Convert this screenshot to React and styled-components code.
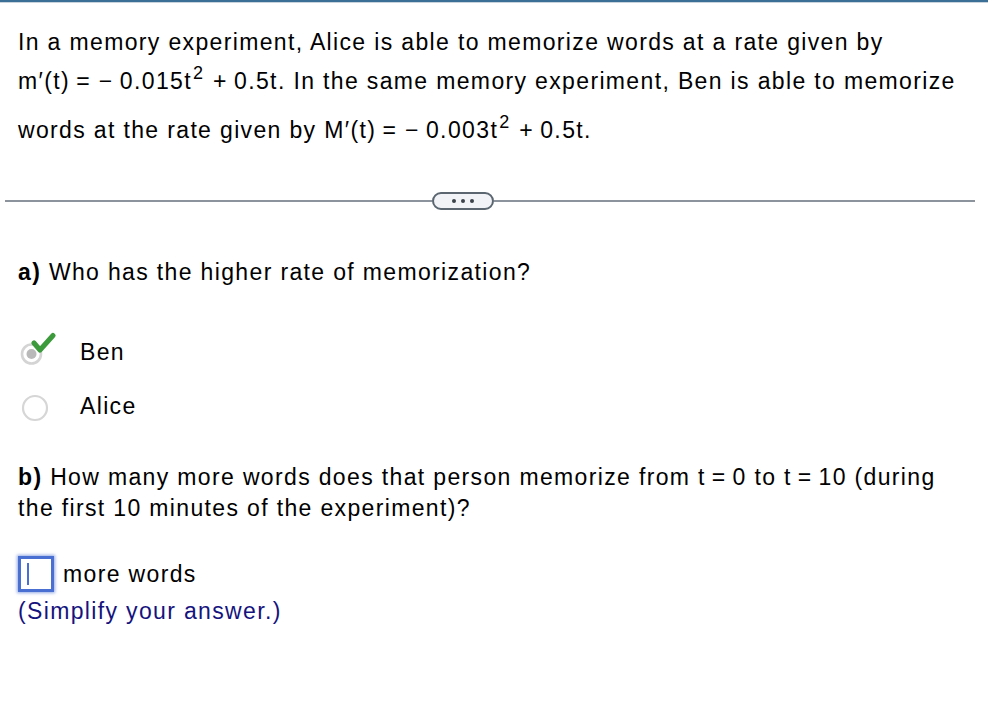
import React from 'react';
import styled, { createGlobalStyle } from 'styled-components';

// ==============================================

const Global = createGlobalStyle`
  html, body {
    margin: 0;
    padding: 0;
    background: #ffffff;
  }
  body {
    font-family: "Liberation Sans", Arial, sans-serif;
    color: #000000;
  }
`;

const Page = styled.div`
  width: 988px;
  height: 712px;
  overflow: hidden;
  border-top: 2px solid #3b6f96;
  box-shadow: inset 0 1px 0 #c9d3db;
  font-size: 23px;
  letter-spacing: 1.35px;
`;

const Question = styled.div`
  padding: 25px 20px 0 18px;
  line-height: 31px;
`;

const Math = styled.span`
  display: inline-block;
  padding-top: ${(p) => p.$pad || 0}px;
  line-height: 31px;
  white-space: nowrap;
  letter-spacing: 1.4px;
`;

const Sup = styled.sup`
  font-size: 18px;
  line-height: 0;
  vertical-align: 10px;
  letter-spacing: 0;
  margin: 0 10px 0 1px;
`;

const Divider = styled.div`
  display: flex;
  align-items: center;
  margin: 46px 13px 0 5px;
  &::before,
  &::after {
    content: '';
    flex: 1;
    height: 2px;
    background: #8c939c;
  }
  &::before {
    flex: 0 0 427px;
  }
`;

const MoreButton = styled.button`
  display: flex;
  align-items: center;
  justify-content: center;
  gap: 5px;
  width: 62px;
  height: 18px;
  padding: 0;
  border: 2px solid #5b6671;
  border-radius: 9px;
  background: #f1f3f6;
  span {
    width: 4px;
    height: 4px;
    border-radius: 50%;
    background: #3d434a;
  }
`;

const Part = styled.div`
  padding: 0 20px 0 18px;
  line-height: 31px;
  margin-top: ${(p) => p.$top || 0}px;
  b {
    font-weight: bold;
  }
`;

const Options = styled.div`
  display: flex;
  flex-direction: column;
  gap: 14px;
  margin-top: 44px;
  padding-left: 18px;
`;

const Option = styled.label`
  display: flex;
  align-items: center;
  gap: 22px;
  line-height: 31px;
`;

const RadioIcon = styled.svg`
  width: 40px;
  height: 40px;
  flex: none;
`;

const AnswerRow = styled.div`
  display: flex;
  align-items: center;
  gap: 9px;
  margin-top: 32px;
  padding-left: 18px;
`;

const AnswerBox = styled.div`
  position: relative;
  width: 30px;
  height: 30px;
  border: 3px solid #4a6fd3;
  box-shadow: 0 0 3px 1px rgba(74, 111, 211, 0.6);
  background: #fff;
  &::after {
    content: '';
    position: absolute;
    left: 6px;
    top: 4px;
    width: 2px;
    height: 22px;
    background: #4a6fd3;
  }
`;

const Hint = styled.div`
  padding-left: 18px;
  margin-top: 4px;
  line-height: 31px;
  color: #15137e;
`;

// ==============================================

const T = '\u2009';

function Checked() {
  return (
    <RadioIcon viewBox='0 0 40 40'>
      <circle cx='13.5' cy='22' r='9.5' fill='none' stroke='#d4d4d4' strokeWidth='2.6' />
      <circle cx='13.5' cy='22' r='5' fill='#b9b9b9' />
      <path d='M16 11 L22 18 L35 3.5' fill='none' stroke='#3c9a3c' strokeWidth='5' strokeLinecap='round' strokeLinejoin='round' />
    </RadioIcon>
  );
}

function Empty() {
  return (
    <RadioIcon viewBox='0 0 40 40'>
      <circle cx='17' cy='22' r='12' fill='#fff' stroke='#d6d6d6' strokeWidth='2.2' />
    </RadioIcon>
  );
}

export default function App() {
  return (
    <Page>
      <Global />
      <Question>
        In a memory experiment, Alice is able to memorize words at a rate given by{' '}
        <Math $pad={8}>
          m′(t){T}={' '}−{T}0.015t<Sup>2</Sup>+{T}0.5t.
        </Math>{' '}
        In the same memory experiment, Ben is able to memorize words at the rate given by{' '}
        <Math $pad={18}>
          M′(t){T}={' '}−{T}0.003t<Sup>2</Sup>+{T}0.5t.
        </Math>
      </Question>

      <Divider>
        <MoreButton aria-label='more'>
          <span />
          <span />
          <span />
        </MoreButton>
      </Divider>

      <Part $top={47}>
        <b>a)</b> Who has the higher rate of memorization?
      </Part>

      <Options>
        <Option>
          <Checked />
          Ben
        </Option>
        <Option>
          <Empty />
          Alice
        </Option>
      </Options>

      <Part $top={36}>
        <b>b)</b> How many more words does that person memorize from t{T}={T}0 to t{T}={T}10 (during the first 10 minutes of the experiment)?
      </Part>

      <AnswerRow>
        <AnswerBox />
        more words
      </AnswerRow>
      <Hint>(Simplify your answer.)</Hint>
    </Page>
  );
}
